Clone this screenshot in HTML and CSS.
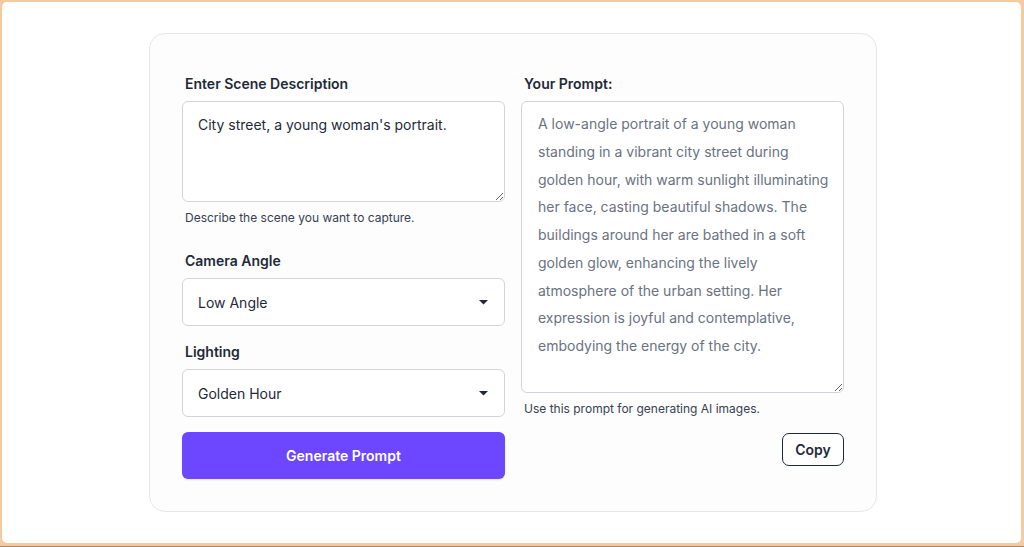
FILE: index.html
```html
<!DOCTYPE html>
<html lang="en">
<head>
<meta charset="utf-8">
<title>Prompt Generator</title>
<link rel="stylesheet" href="styles.css">
</head>
<body>
<div class="frame">
  <div class="card">
    <div class="col">
      <label class="label" for="scene">Enter Scene Description</label>
      <textarea id="scene" class="field scene">City street, a young woman's portrait.</textarea>
      <p class="help">Describe the scene you want to capture.</p>

      <label class="label label-gap" for="angle">Camera Angle</label>
      <div class="select">
        <span>Low Angle</span>
        <svg class="caret" width="9" height="5" viewBox="0 0 9 5"><path d="M0 0h9L4.5 4.6z" fill="#1f2937"/></svg>
      </div>

      <label class="label label-gap2" for="light">Lighting</label>
      <div class="select">
        <span>Golden Hour</span>
        <svg class="caret" width="9" height="5" viewBox="0 0 9 5"><path d="M0 0h9L4.5 4.6z" fill="#1f2937"/></svg>
      </div>

      <button class="generate">Generate Prompt</button>
    </div>
    <div class="col">
      <label class="label" for="prompt">Your Prompt:</label>
      <textarea id="prompt" class="field prompt">A low-angle portrait of a young woman standing in a vibrant city street during golden hour, with warm sunlight illuminating her face, casting beautiful shadows. The buildings around her are bathed in a soft golden glow, enhancing the lively atmosphere of the urban setting. Her expression is joyful and contemplative, embodying the energy of the city.</textarea>
      <p class="help">Use this prompt for generating AI images.</p>
      <div class="actions"><button class="copy">Copy</button></div>
    </div>
  </div>
</div>
</body>
</html>
```
FILE: styles.css
```css
* { box-sizing: border-box; }
html, body { margin: 0; height: 547px; }
body {
  padding: 2px 3px 4px 2px;
  background: linear-gradient(#f4caa2 calc(100% - 1px), #a98662 0);
  font-family: Inter, "Noto Sans", sans-serif;
  color: #1f2937;
}
.frame {
  height: 100%;
  background: #fff;
  border-radius: 5px;
  display: flex;
  align-items: center;
  justify-content: center;
}
.card {
  width: 728px;
  height: 479px;
  margin-left: 3px;
  background: #fdfdfd;
  border: 1px solid #e5e7eb;
  border-radius: 16px;
  padding: 38px 32px 32px;
  display: grid;
  grid-template-columns: 1fr 1fr;
  column-gap: 16px;
  align-items: start;
}
.col { display: flex; flex-direction: column; }
.label {
  display: block;
  font-size: 14px;
  font-weight: 600;
  line-height: 24px;
  padding-left: 3px;
  margin-bottom: 5px;
  color: #1f2937;
}
.label-gap { margin-top: 22px; }
.label-gap2 { margin-top: 14px; }
.field {
  display: block;
  width: 100%;
  border: 1px solid #d1d5db;
  border-radius: 6px;
  background: #fff;
  font-family: inherit;
  font-size: 14px;
  margin: 0;
  outline: none;
}
.scene {
  height: 101px;
  padding: 12px 15px;
  line-height: 22px;
  color: #1f2937;
}
.prompt {
  height: 292px;
  padding: 8px 10px 8px 16px;
  line-height: 27.75px;
  color: #6b7280;
}
.help {
  margin: 7px 0 0;
  padding-left: 3px;
  font-size: 12px;
  line-height: 18px;
  color: #374151;
}
.select {
  height: 48px;
  border: 1px solid #d1d5db;
  border-radius: 6px;
  background: #fff;
  padding: 0 16px 0 15px;
  display: flex;
  align-items: center;
  justify-content: space-between;
  font-size: 14px;
  color: #1f2937;
}
.caret { margin-top: 1px; }
.generate {
  margin-top: 15px;
  height: 47px;
  border: 0;
  border-radius: 6px;
  background: #6c47ff;
  color: #fff;
  font-family: inherit;
  font-size: 14px;
  font-weight: 600;
  box-shadow: 0 1px 2px rgba(0,0,0,0.08);
}
.actions { display: flex; justify-content: flex-end; margin-top: 15px; }
.copy {
  width: 62px;
  height: 33px;
  border: 1.5px solid #1f2937;
  border-radius: 7px;
  background: #fff;
  color: #1f2937;
  font-family: inherit;
  font-size: 14px;
  font-weight: 600;
  padding: 0;
}
```
